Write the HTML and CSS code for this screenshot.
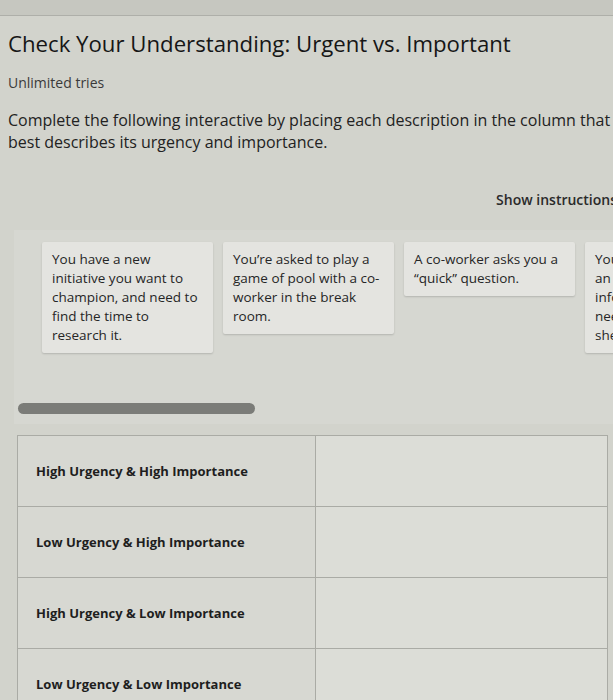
FILE: index.html
```html
<!DOCTYPE html>
<html lang="en">
<head>
<meta charset="utf-8">
<title>Check Your Understanding: Urgent vs. Important</title>
<link rel="stylesheet" href="styles.css">
</head>
<body>
<div class="top-strip"></div>
<main class="page">
  <h1 class="title">Check Your Understanding: Urgent vs. Important</h1>
  <p class="tries">Unlimited tries</p>
  <p class="intro">Complete the following interactive by placing each description in the column that best describes its urgency and importance.</p>
  <div class="instructions-row">
    <span class="instructions">Show instructions</span>
  </div>
  <section class="bank">
    <div class="cards">
      <div class="card">You have a new initiative you want to champion, and need to find the time to research it.</div>
      <div class="card">You’re asked to play a game of pool with a co-worker in the break room.</div>
      <div class="card">A co-worker asks you a “quick” question.</div>
      <div class="card">Your manager sends<br>an email asking for<br>information you<br>need to gather before<br>she meets a client.</div>
    </div>
    <div class="scrollbar"></div>
  </section>
  <table class="grid">
    <tr><th>High Urgency &amp; High Importance</th><td></td></tr>
    <tr><th>Low Urgency &amp; High Importance</th><td></td></tr>
    <tr><th>High Urgency &amp; Low Importance</th><td></td></tr>
    <tr><th>Low Urgency &amp; Low Importance</th><td></td></tr>
  </table>
</main>
</body>
</html>
```
FILE: styles.css
```css
html, body {
  margin: 0;
  padding: 0;
  overflow: hidden;
}
body {
  background: #d2d3cc;
  font-family: "Open Sans", "Liberation Sans", sans-serif;
  color: #222;
  width: 613px;
  height: 700px;
}
.top-strip {
  height: 15px;
  background: #c6c7c0;
  border-bottom: 1px solid #aeafa9;
}
.page {
  padding-left: 8px;
  width: 617px;
}
.title {
  margin: 12px 0 0;
  font-size: 22.2px;
  line-height: 32px;
  font-weight: 400;
  color: #161616;
}
.tries {
  margin: 13px 0 0;
  font-size: 14px;
  line-height: 20px;
  color: #3a3a3a;
}
.intro {
  margin: 16px 0 0;
  font-size: 16px;
  line-height: 22px;
  color: #222;
}
.instructions-row {
  margin-top: 37px;
  display: flex;
  justify-content: flex-end;
}
.instructions {
  margin-right: 8px;
  font-size: 14px;
  line-height: 20px;
  font-weight: 600;
  color: #2a2a2a;
  white-space: nowrap;
}
.bank {
  margin: 20px 0 0 6px;
  width: 640px;
  background: #d6d7d1;
  padding: 12px 0 10px 0;
  overflow: hidden;
}
.cards {
  display: flex;
  flex-wrap: nowrap;
  align-items: flex-start;
  gap: 10px;
  padding-left: 28px;
}
.card {
  flex: 0 0 171px;
  box-sizing: border-box;
  background: #e4e4e0;
  padding: 8px 7px 8px 10px;
  font-size: 13.5px;
  line-height: 19px;
  color: #262626;
  border-radius: 2px;
  box-shadow: 0 1px 2px rgba(0,0,0,0.16);
}
.scrollbar {
  margin: 50px 0 0 4px;
  width: 237px;
  height: 11px;
  border-radius: 6px;
  background: #7b7c78;
}
.grid {
  margin: 11px 0 0 9px;
  width: 591px;
  border-collapse: collapse;
  table-layout: fixed;
}
.grid th, .grid td {
  border: 1px solid #aaaba5;
  height: 70px;
  padding: 0;
  vertical-align: middle;
}
.grid th {
  width: 298px;
  text-align: left;
  padding-left: 18px;
  font-size: 13px;
  font-weight: 700;
  color: #1e1e1e;
  background: #d7d8d2;
  box-sizing: border-box;
}
.grid td {
  background: #dcddd7;
}
```
